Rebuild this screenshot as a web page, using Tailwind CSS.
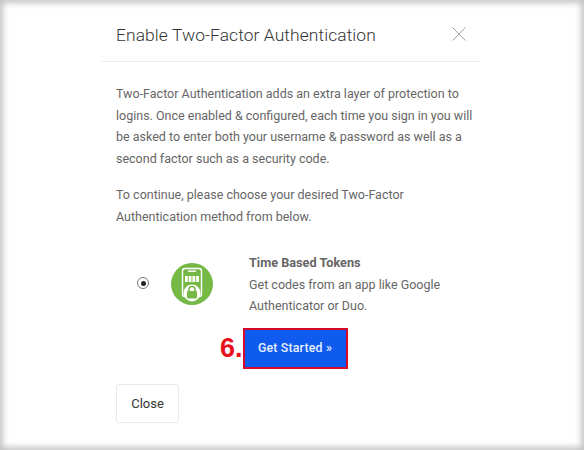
<!DOCTYPE html>
<html>
<head>
<script src="https://cdn.jsdelivr.net/npm/@tailwindcss/browser@4"></script>
</head>
<body class="m-0 bg-white">
<div class="w-[584px] h-[450px] overflow-hidden bg-white shadow-[inset_0_0_6px_3px_#c4c4c4] font-['Roboto',sans-serif] flex justify-center">
  <div class="w-[378px] ml-[-2px] flex flex-col">
    <div class="h-[62px] shrink-0 border-b border-[#ececec] flex items-center justify-between pl-[14px] pr-[12px] pt-[10px]">
      <div class="text-[17.4px] font-light text-[#333] tracking-[0.1px]">Enable Two-Factor Authentication</div>
      <svg class="w-[16px] h-[16px] mr-[1px] mb-[3px]" viewBox="0 0 16 16" fill="none" stroke="#a3a3a3" stroke-width="1"><path d="M1.5 1.5 14.5 14.5M14.5 1.5 1.5 14.5"/></svg>
    </div>
    <div class="pl-[14px] pt-[21px] text-[12.5px] leading-[21.5px] text-[#666] whitespace-nowrap">
      <p>Two-Factor Authentication adds an extra layer of protection to<br>logins. Once enabled &amp; configured, each time you sign in you will<br>be asked to enter both your username &amp; password as well as a<br>second factor such as a security code.</p>
      <p class="mt-[15px]">To continue, please choose your desired Two-Factor<br>Authentication method from below.</p>
    </div>
    <div class="flex items-start mt-[25px]">
      <div class="ml-[35px] mt-[25px] w-[12px] h-[12px] rounded-full border border-[#777] flex items-center justify-center shrink-0">
        <div class="w-[5px] h-[5px] rounded-full bg-[#222]"></div>
      </div>
      <svg class="ml-[22px] mt-[11px] w-[42px] h-[42px] shrink-0" viewBox="0 0 42 42">
        <circle cx="21" cy="21" r="21" fill="#76b947"/>
        <rect x="11.5" y="5.5" width="19" height="28" rx="2.5" fill="none" stroke="#fff" stroke-width="1.4"/>
        <rect x="17" y="7.5" width="8" height="1.4" fill="#fff"/>
        <rect x="14" y="13" width="2.8" height="6" fill="#fff"/>
        <rect x="17.7" y="13" width="2.8" height="6" fill="#fff"/>
        <rect x="21.4" y="13" width="2.8" height="6" fill="#fff"/>
        <rect x="25.1" y="13" width="2.8" height="6" fill="#fff"/>
        <circle cx="21" cy="30" r="8.5" fill="#fff"/>
        <rect x="16" y="28" width="10" height="7.5" rx="1" fill="#76b947"/>
        <path d="M18 28v-1.5a3 3 0 0 1 6 0v1.5" fill="none" stroke="#76b947" stroke-width="1.5"/>
      </svg>
      <div class="ml-[36px] text-[12.5px] leading-[21.5px] text-[#666] whitespace-nowrap">
        <div class="font-bold text-[12.7px]">Time Based Tokens</div>
        <div>Get codes from an app like Google<br>Authenticator or Duo.</div>
      </div>
    </div>
    <div class="flex items-center mt-[11.5px] ml-[118px]">
      <span class="text-[27px] leading-none font-bold text-[#e8101c] font-['Liberation_Sans',sans-serif]">6.</span>
      <div class="w-[105px] h-[41px] bg-[#0f5bf0] border-[2.5px] border-[#d5092a] flex items-center justify-center text-[12.3px] font-medium text-[#e8f0ff] tracking-[0.2px]">Get Started »</div>
    </div>
    <div class="mt-[15px] ml-[14px] w-[63px] h-[39px] rounded-[3px] border border-[#e8e8e8] bg-white flex items-center justify-center text-[13px] text-[#333]">Close</div>
  </div>
</div>
</body>
</html>
